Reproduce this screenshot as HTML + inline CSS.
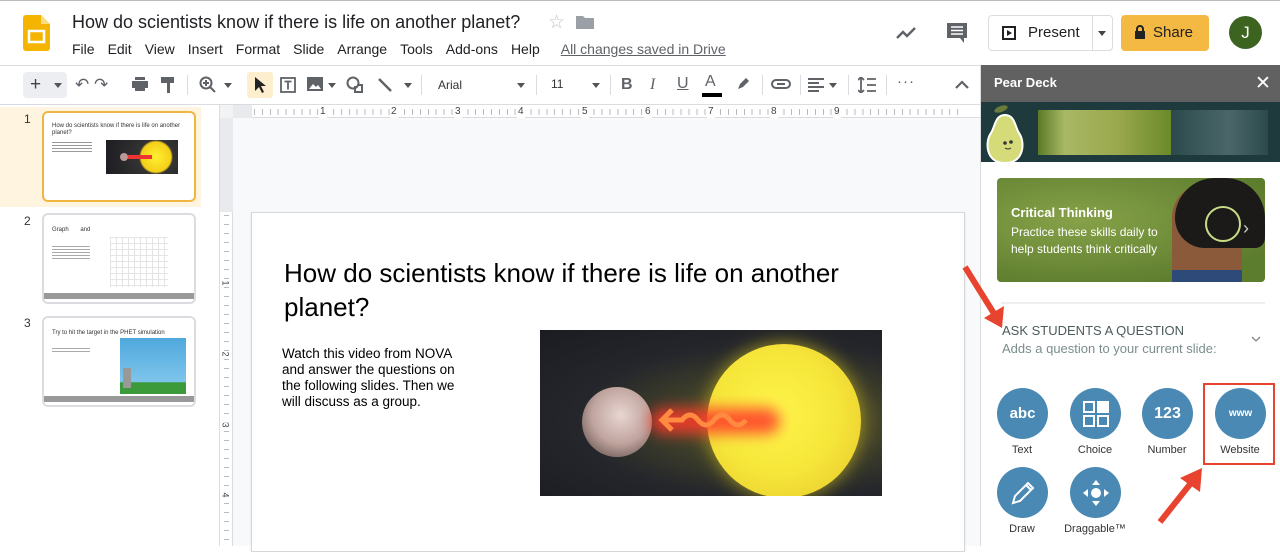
<!DOCTYPE html>
<html><head><meta charset="utf-8"><style>
*{margin:0;padding:0;box-sizing:border-box}
body{width:1280px;height:546px;overflow:hidden;font-family:"Liberation Sans",Arial,sans-serif;background:#fff;position:relative;color:#202124}
.a{position:absolute}
.menu span{margin-right:13px}
.tb{color:#5f6368;font-size:15px}
.circ{position:absolute;width:51px;height:51px;border-radius:50%;background:#4a89b4;color:#fff;font-weight:bold;display:flex;align-items:center;justify-content:center}
.lab{position:absolute;font-size:11px;color:#333;text-align:center;width:80px}
.rn{position:absolute;top:105px;font-size:10px;color:#444;line-height:13px;background:#fff;padding:0 1px}
.vn{position:absolute;left:223px;font-size:9px;color:#444;transform:rotate(90deg);background:#fff}
</style></head><body>
<div class="a" style="left:0;top:0;width:1280px;height:1px;background:#bbb"></div>
<svg class="a" style="left:23px;top:15px" width="27" height="36" viewBox="0 0 27 36"><path d="M3 0h15l9 9v24a3 3 0 0 1-3 3H3a3 3 0 0 1-3-3V3a3 3 0 0 1 3-3z" fill="#f4b400"/><path d="M18 0l9 9h-9z" fill="#f9dc82"/><rect x="6" y="16" width="15" height="11" fill="none" stroke="#fff" stroke-width="2.5"/></svg>
<div class="a" style="left:72px;top:12px;font-size:18px;color:#202124">How do scientists know if there is life on another planet?</div>
<div class="a" style="left:548px;top:11px;font-size:19px;color:#c4c4c4">☆</div>
<svg class="a" style="left:576px;top:15px" width="18" height="14"><path d="M0 1h7l2 2h9v11H0z" fill="#9aa0a6"/></svg>
<div class="a menu" style="left:72px;top:41px;font-size:14px;color:#202124"><span>File</span><span>Edit</span><span>View</span><span>Insert</span><span>Format</span><span>Slide</span><span>Arrange</span><span>Tools</span><span>Add-ons</span><span>Help</span><span style="color:#5f6368;text-decoration:underline;margin-left:8px">All changes saved in Drive</span></div>
<svg class="a" style="left:896px;top:27px" width="20" height="12"><path d="M1 11l6-6 4 4 8-8" stroke="#5f6368" stroke-width="2.4" fill="none"/></svg>
<svg class="a" style="left:947px;top:23px" width="20" height="20"><path d="M0 0h20v15h-3v5l-4-5H0z" fill="#5f6368"/><path d="M4 4h12M4 7.5h12M4 11h12" stroke="#fff" stroke-width="1.5"/></svg>
<div class="a" style="left:988px;top:15px;width:125px;height:36px;border:1px solid #dadce0;border-radius:4px"></div>
<div class="a" style="left:1092px;top:15px;width:1px;height:36px;background:#dadce0"></div>
<svg class="a" style="left:1002px;top:26px" width="14" height="14"><rect x="1" y="1" width="12" height="12" fill="none" stroke="#202124" stroke-width="2"/><path d="M5 4l5 3-5 3z" fill="#202124"/></svg>
<div class="a" style="left:1028px;top:24px;font-size:15px">Present</div>
<div class="a" style="left:1098px;top:31px;border:4px solid transparent;border-top:5px solid #444"></div>
<div class="a" style="left:1121px;top:15px;width:88px;height:36px;background:#f4b942;border-radius:4px"></div>
<svg class="a" style="left:1134px;top:25px" width="12" height="14"><path d="M3 6V4a3 3 0 0 1 6 0v2" stroke="#222" stroke-width="2" fill="none"/><rect x="1" y="6" width="10" height="8" fill="#222"/></svg>
<div class="a" style="left:1153px;top:24px;font-size:15px;color:#202124">Share</div>
<div class="a" style="left:1229px;top:16px;width:33px;height:33px;border-radius:50%;background:#3c6420;color:#fff;font-size:17px;text-align:center;line-height:33px">J</div>
<!-- toolbar -->
<div class="a" style="left:0;top:65px;width:980px;height:1px;background:#dadce0"></div>
<div class="a" style="left:23px;top:72px;width:44px;height:26px;background:#eceef1;border-radius:4px"></div>
<div class="a tb" style="left:30px;top:74px;font-size:19px;color:#444">+</div>
<div class="a" style="left:54px;top:83px;border:4px solid transparent;border-top:5px solid #555"></div>
<div class="a tb" style="left:75px;top:75px;font-size:17px">↶ ↷</div>
<svg class="a" style="left:132px;top:77px" width="16" height="14"><rect x="0" y="4" width="16" height="7" fill="#5f6368"/><rect x="3" y="0" width="10" height="3" fill="#5f6368"/><rect x="3" y="9" width="10" height="5" fill="#5f6368"/></svg>
<svg class="a" style="left:161px;top:77px" width="14" height="16"><rect x="0" y="0" width="13" height="6" fill="#5f6368"/><rect x="6" y="6" width="3" height="10" fill="#5f6368"/></svg>
<div class="a" style="left:187px;top:75px;width:1px;height:20px;background:#dadce0"></div>
<svg class="a" style="left:199px;top:76px" width="18" height="18"><circle cx="7" cy="7" r="5.5" stroke="#5f6368" stroke-width="2" fill="none"/><path d="M11 11l5 5M4 7h6M7 4v6" stroke="#5f6368" stroke-width="2"/></svg>
<div class="a" style="left:224px;top:83px;border:4px solid transparent;border-top:5px solid #555"></div>
<div class="a" style="left:247px;top:72px;width:26px;height:26px;background:#fdefce;border-radius:3px"></div>
<svg class="a" style="left:254px;top:77px" width="12" height="16"><path d="M1 0v14l4-4 3 6 2-1-3-6h5z" fill="#222"/></svg>
<svg class="a" style="left:279px;top:76px" width="18" height="18"><rect x="2" y="2" width="14" height="14" fill="none" stroke="#5f6368" stroke-width="1.8"/><path d="M5.5 5.5h7M9 5.5v8" stroke="#5f6368" stroke-width="1.8"/></svg>
<svg class="a" style="left:307px;top:77px" width="16" height="14"><rect width="16" height="14" fill="#5f6368"/><path d="M2 12l4-5 3 3 2-2 3 4z" fill="#fff"/></svg>
<div class="a" style="left:328px;top:83px;border:4px solid transparent;border-top:5px solid #555"></div>
<svg class="a" style="left:346px;top:76px" width="18" height="18"><circle cx="7" cy="7" r="5.5" stroke="#5f6368" stroke-width="2" fill="none"/><path d="M9 10v6h7v-7h-4" stroke="#5f6368" stroke-width="2" fill="none"/></svg>
<svg class="a" style="left:377px;top:77px" width="16" height="16"><path d="M2 2l12 12" stroke="#5f6368" stroke-width="2.5"/></svg>
<div class="a" style="left:404px;top:83px;border:4px solid transparent;border-top:5px solid #555"></div>
<div class="a" style="left:421px;top:75px;width:1px;height:20px;background:#dadce0"></div>
<div class="a" style="left:438px;top:78px;font-size:12px;color:#333">Arial</div>
<div class="a" style="left:517px;top:83px;border:4px solid transparent;border-top:5px solid #555"></div>
<div class="a" style="left:536px;top:75px;width:1px;height:20px;background:#dadce0"></div>
<div class="a" style="left:551px;top:77px;font-size:12px;color:#333">11</div>
<div class="a" style="left:592px;top:83px;border:4px solid transparent;border-top:5px solid #555"></div>
<div class="a" style="left:610px;top:75px;width:1px;height:20px;background:#dadce0"></div>
<div class="a" style="left:621px;top:76px;font-size:16px;font-weight:bold;color:#5f6368">B</div>
<div class="a" style="left:650px;top:76px;font-size:16px;font-style:italic;color:#5f6368;font-family:'Liberation Serif',serif">I</div>
<div class="a" style="left:677px;top:75px;font-size:16px;text-decoration:underline;color:#5f6368">U</div>
<div class="a" style="left:705px;top:73px;font-size:16px;color:#5f6368">A</div>
<div class="a" style="left:702px;top:93px;width:20px;height:4px;background:#000"></div>
<svg class="a" style="left:735px;top:76px" width="16" height="16"><path d="M3 13l2-5 6-6 3 3-6 6z" fill="#5f6368"/></svg>
<div class="a" style="left:762px;top:75px;width:1px;height:20px;background:#dadce0"></div>
<svg class="a" style="left:771px;top:79px" width="20" height="10"><rect x="1" y="1" width="18" height="8" rx="4" fill="none" stroke="#5f6368" stroke-width="2"/><path d="M6 5h8" stroke="#5f6368" stroke-width="2"/></svg>
<div class="a" style="left:800px;top:75px;width:1px;height:20px;background:#dadce0"></div>
<svg class="a" style="left:808px;top:78px" width="16" height="14"><path d="M0 1h16M0 5h11M0 9h16M0 13h11" stroke="#5f6368" stroke-width="2"/></svg>
<div class="a" style="left:829px;top:83px;border:4px solid transparent;border-top:5px solid #555"></div>
<div class="a" style="left:848px;top:75px;width:1px;height:20px;background:#dadce0"></div>
<svg class="a" style="left:858px;top:77px" width="18" height="16"><path d="M3 0v16M0 3l3-3 3 3M0 13l3 3 3-3M9 2h9M9 8h9M9 14h9" stroke="#5f6368" stroke-width="1.8" fill="none"/></svg>
<div class="a" style="left:886px;top:75px;width:1px;height:20px;background:#dadce0"></div>
<div class="a" style="left:897px;top:73px;font-size:15px;color:#5f6368;letter-spacing:1px">···</div>
<svg class="a" style="left:955px;top:80px" width="14" height="9"><path d="M1 8l6-6 6 6" stroke="#5f6368" stroke-width="2.2" fill="none"/></svg>
<div class="a" style="left:0;top:104px;width:980px;height:1px;background:#dadce0"></div>
<!-- filmstrip -->
<div class="a" style="left:219px;top:105px;width:1px;height:441px;background:#dadce0"></div>
<div class="a" style="left:0;top:107px;width:201px;height:100px;background:#fef4e0"></div>
<div class="a" style="left:24px;top:112px;font-size:12px;color:#333">1</div>
<div class="a" style="left:24px;top:214px;font-size:12px;color:#333">2</div>
<div class="a" style="left:24px;top:316px;font-size:12px;color:#333">3</div>
<div class="a" style="left:42px;top:111px;width:154px;height:91px;border:2px solid #f0b642;border-radius:6px;background:#fff;overflow:hidden">
 <div style="position:absolute;left:8px;top:10px;font-size:6px;line-height:7px;color:#333;width:140px">How do scientists know if there is life on another planet?</div>
 <div style="position:absolute;left:8px;top:29px;width:40px;height:12px;background:repeating-linear-gradient(#999 0 1px,transparent 1px 3px)"></div>
 <div style="position:absolute;left:62px;top:27px;width:72px;height:34px;background:radial-gradient(circle at 50px 17px,#ffef30 0,#f4cf1a 15px,#333 17px,#1c1c22)"></div>
 <div style="position:absolute;left:76px;top:40px;width:8px;height:8px;border-radius:50%;background:#b99"></div>
 <div style="position:absolute;left:84px;top:42px;width:24px;height:4px;background:#e33"></div>
</div>
<div class="a" style="left:42px;top:213px;width:154px;height:91px;border:2px solid #dadce0;border-radius:6px;background:#fff;overflow:hidden">
 <div style="position:absolute;left:8px;top:12px;font-size:6px;color:#333">Graph &nbsp;&nbsp;&nbsp;&nbsp;&nbsp; and</div>
 <div style="position:absolute;left:8px;top:31px;width:38px;height:14px;background:repeating-linear-gradient(#aaa 0 1px,transparent 1px 3px)"></div>
 <div style="position:absolute;left:66px;top:22px;width:58px;height:50px;background:repeating-linear-gradient(90deg,#e4e4e4 0 1px,transparent 1px 6px),repeating-linear-gradient(#e4e4e4 0 1px,transparent 1px 6px)"></div>
 <div style="position:absolute;left:0;top:78px;width:154px;height:6px;background:#999"></div>
</div>
<div class="a" style="left:42px;top:316px;width:154px;height:91px;border:2px solid #dadce0;border-radius:6px;background:#fff;overflow:hidden">
 <div style="position:absolute;left:8px;top:12px;font-size:6px;color:#333">Try to hit the target in the PHET simulation</div>
 <div style="position:absolute;left:8px;top:30px;width:38px;height:5px;background:repeating-linear-gradient(#aaa 0 1px,transparent 1px 3px)"></div>
 <div style="position:absolute;left:76px;top:20px;width:66px;height:56px;background:linear-gradient(#4fa8dc 0,#7ec5ec 78%,#3c9a3a 80%)"></div>
 <div style="position:absolute;left:79px;top:50px;width:8px;height:20px;background:#999"></div>
 <div style="position:absolute;left:0;top:78px;width:154px;height:6px;background:#999"></div>
</div>
<!-- canvas -->
<div class="a" style="left:220px;top:105px;width:760px;height:441px;background:#f8f9fa"></div>
<div class="a" style="left:220px;top:105px;width:760px;height:13px;background:#fff;border-bottom:1px solid #dadce0"></div>
<div class="a" style="left:220px;top:105px;width:13px;height:441px;background:#fff;border-right:1px solid #dadce0"></div>
<div class="a" style="left:220px;top:105px;width:13px;height:13px;background:#f1f3f4"></div>
<div class="a" style="left:220px;top:118px;width:13px;height:94px;background:#e8eaed"></div>
<div class="a" style="left:233px;top:105px;width:19px;height:13px;background:#e8eaed"></div>
<div class="a" style="left:254px;top:109px;width:710px;height:6px;background:repeating-linear-gradient(90deg,#bbb 0 1px,transparent 1px 7.9px)"></div>
<div class="a" style="left:224px;top:215px;width:5px;height:331px;background:repeating-linear-gradient(#bbb 0 1px,transparent 1px 9px)"></div>
<div class="rn" style="left:319px">1</div><div class="rn" style="left:390px">2</div><div class="rn" style="left:454px">3</div><div class="rn" style="left:517px">4</div><div class="rn" style="left:581px">5</div><div class="rn" style="left:644px">6</div><div class="rn" style="left:707px">7</div><div class="rn" style="left:770px">8</div><div class="rn" style="left:833px">9</div>
<div class="vn" style="top:278px">1</div><div class="vn" style="top:349px">2</div><div class="vn" style="top:420px">3</div><div class="vn" style="top:490px">4</div>
<!-- slide -->
<div class="a" style="left:251px;top:212px;width:714px;height:340px;background:#fff;border:1px solid #d6d6d6;box-shadow:0 1px 2px rgba(0,0,0,.1)"></div>
<div class="a" style="left:284px;top:256px;font-size:26px;line-height:34px;color:#000;width:640px">How do scientists know if there is life on another planet?</div>
<div class="a" style="left:282px;top:346px;font-size:13.5px;line-height:16px;color:#000;width:190px">Watch this video from NOVA and answer the questions on the following slides. Then we will discuss as a group.</div>
<div class="a" style="left:540px;top:330px;width:342px;height:166px;overflow:hidden;background:radial-gradient(ellipse at 70% 55%,#6e6a2a 0,#3d3d2a 35%,#24262b 60%,#1a1c22 100%)">
 <div style="position:absolute;left:167px;top:14px;width:154px;height:154px;border-radius:50%;background:radial-gradient(circle at 45% 45%,#fff44a 0,#f6e63a 50%,#e6c42a 100%);box-shadow:0 0 18px #a89a20"></div>
 <div style="position:absolute;left:42px;top:57px;width:70px;height:70px;border-radius:50%;background:radial-gradient(circle at 55% 40%,#e8d6d2 0,#c0a49e 50%,#4a3a38 100%)"></div>
 <div style="position:absolute;left:110px;top:78px;width:130px;height:26px;border-radius:13px;background:#ff3a2a;filter:blur(7px);opacity:.85"></div>
 <svg style="position:absolute;left:110px;top:72px" width="110" height="36"><path d="M22 8l-10 10 10 10M12 18h20q8-10 16 0t16 0 16 0 16 0" stroke="#ff8a40" stroke-width="5" fill="none"/></svg>
</div>
<!-- sidebar -->
<div class="a" style="left:980px;top:65px;width:300px;height:481px;background:#fff;border-left:1px solid #dadce0"></div>
<div class="a" style="left:981px;top:65px;width:299px;height:37px;background:#616161"></div>
<div class="a" style="left:994px;top:75px;font-size:13px;font-weight:bold;color:#fff">Pear Deck</div>
<div class="a" style="left:1255px;top:72px;font-size:19px;color:#fff">✕</div>
<div class="a" style="left:981px;top:102px;width:299px;height:60px;background:#1e3a3c"></div>
<div class="a" style="left:1038px;top:110px;width:133px;height:45px;background:linear-gradient(90deg,#5a7a28,#a8b865 20%,#9aa84c 60%,#6a8a2a)"></div>
<div class="a" style="left:1171px;top:110px;width:97px;height:45px;background:linear-gradient(90deg,#2c4a4c,#4a6668 60%,#2c4a4c)"></div>
<svg class="a" style="left:981px;top:103px" width="48" height="60"><path d="M24 12c-10 0-10 12-14 18-6 8-6 30 14 30s20-22 14-30c-4-6-4-18-14-18z" fill="#d6db7a" stroke="#fff" stroke-width="2"/><ellipse cx="20" cy="6" rx="7" ry="3" fill="#6a7a3a" transform="rotate(-20 20 6)"/><circle cx="24" cy="40" r="1.8" fill="#333"/><circle cx="30" cy="39" r="1.8" fill="#333"/><path d="M24 45q3 2 6 0" stroke="#333" fill="none"/></svg>
<div class="a" style="left:997px;top:178px;width:268px;height:104px;border-radius:4px;background:radial-gradient(ellipse at 30% 40%,#86a148,#5d7d2e 80%);overflow:hidden">
 <div style="position:absolute;left:175px;top:5px;width:70px;height:120px;border-radius:40px 40px 0 0;background:#8a5a3a"></div>
 <div style="position:absolute;left:178px;top:0;width:90px;height:70px;border-radius:40px 40px 10px 30px;background:#1c1a18"></div>
 <div style="position:absolute;left:208px;top:28px;width:36px;height:36px;border-radius:50%;border:2px solid #c8dc88"></div>
 <div style="position:absolute;left:175px;top:92px;width:70px;height:14px;background:#2e4a78"></div>
</div>
<div class="a" style="left:1011px;top:205px;font-size:13px;font-weight:bold;color:#fff">Critical Thinking</div>
<div class="a" style="left:1011px;top:224px;font-size:12px;line-height:17px;color:#fff">Practice these skills daily to<br>help students think critically</div>
<div class="a" style="left:1243px;top:218px;font-size:18px;color:#ccc">›</div>
<div class="a" style="left:1001px;top:302px;width:264px;height:2px;background:#eee"></div>
<div class="a" style="left:1002px;top:323px;font-size:13px;color:#4b5a5a">ASK STUDENTS A QUESTION</div>
<div class="a" style="left:1002px;top:341px;font-size:13px;color:#7b8d8d">Adds a question to your current slide:</div>
<svg class="a" style="left:1251px;top:336px" width="10" height="7"><path d="M1 1l4 4 4-4" stroke="#888" stroke-width="1.3" fill="none"/></svg>
<div class="circ" style="left:997px;top:388px;font-size:15px">abc</div>
<div class="circ" style="left:1070px;top:388px"><svg width="26" height="26"><rect x="1" y="1" width="10" height="10" fill="none" stroke="#fff" stroke-width="2"/><rect x="14" y="0" width="12" height="12" fill="#fff"/><rect x="1" y="15" width="10" height="10" fill="none" stroke="#fff" stroke-width="2"/><rect x="15" y="15" width="10" height="10" fill="none" stroke="#fff" stroke-width="2"/></svg></div>
<div class="circ" style="left:1142px;top:388px;font-size:16px">123</div>
<div class="circ" style="left:1215px;top:388px;font-size:10px">www</div>
<div class="circ" style="left:997px;top:467px"><svg width="26" height="26"><path d="M3 23l2-7 13-13 5 5-13 13zM16 5l5 5" stroke="#fff" stroke-width="2" fill="none"/></svg></div>
<div class="circ" style="left:1070px;top:467px"><svg width="30" height="30"><circle cx="15" cy="15" r="5" fill="#fff"/><path d="M15 2l4 5h-8zM15 28l4-5h-8zM2 15l5-4v8zM28 15l-5-4v8z" fill="#fff"/></svg></div>
<div class="lab" style="left:982px;top:444px">Text</div>
<div class="lab" style="left:1055px;top:444px">Choice</div>
<div class="lab" style="left:1127px;top:444px">Number</div>
<div class="lab" style="left:1200px;top:444px">Website</div>
<div class="lab" style="left:982px;top:523px">Draw</div>
<div class="lab" style="left:1055px;top:523px">Draggable™</div>
<div class="a" style="left:1203px;top:383px;width:72px;height:82px;border:2px solid #e8432e"></div>
<svg class="a" style="left:960px;top:262px" width="60" height="80"><path d="M5 5L38 58" stroke="#e8432e" stroke-width="6"/><path d="M24 56l18 10 2-22z" fill="#e8432e"/></svg>
<svg class="a" style="left:1150px;top:460px" width="60" height="70"><path d="M10 62L45 18" stroke="#e8432e" stroke-width="6"/><path d="M30 18l22-10-2 24z" fill="#e8432e"/></svg>
</body></html>
